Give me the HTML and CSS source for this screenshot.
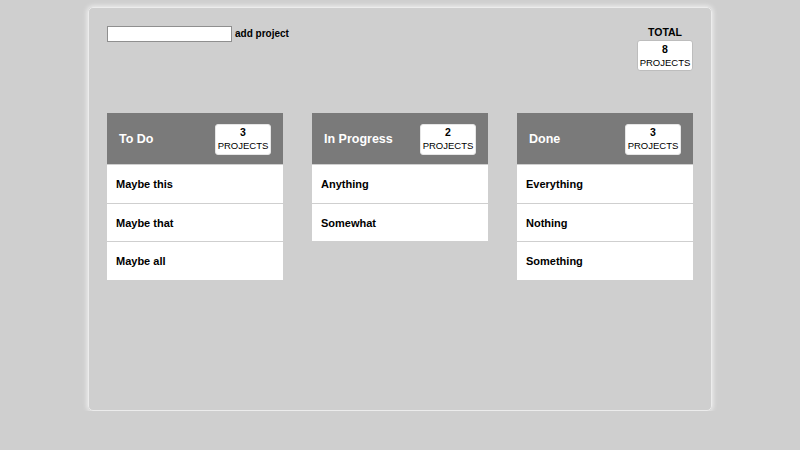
FILE: index.html
```html
<!DOCTYPE html>
<html>
<head>
<meta charset="utf-8">
<link rel="stylesheet" href="styles.css">
</head>
<body>
<div class="board">
  <div class="top">
    <div class="add">
      <input class="add-input" type="text">
      <span class="add-label">add project</span>
    </div>
    <div class="total">
      <div class="total-title">TOTAL</div>
      <div class="badge"><b>8</b><span>PROJECTS</span></div>
    </div>
  </div>
  <div class="columns">
    <div class="col">
      <div class="col-head"><span class="col-title">To Do</span><div class="badge"><b>3</b><span>PROJECTS</span></div></div>
      <div class="item">Maybe this</div>
      <div class="item">Maybe that</div>
      <div class="item">Maybe all</div>
    </div>
    <div class="col">
      <div class="col-head"><span class="col-title">In Progress</span><div class="badge"><b>2</b><span>PROJECTS</span></div></div>
      <div class="item">Anything</div>
      <div class="item">Somewhat</div>
    </div>
    <div class="col">
      <div class="col-head"><span class="col-title">Done</span><div class="badge"><b>3</b><span>PROJECTS</span></div></div>
      <div class="item">Everything</div>
      <div class="item">Nothing</div>
      <div class="item">Something</div>
    </div>
  </div>
</div>
</body>
</html>
```
FILE: styles.css
```css
html, body {
  margin: 0;
  padding: 0;
  background: #cfcfcf;
  font-family: "Liberation Sans", Arial, sans-serif;
}
.board {
  box-sizing: border-box;
  width: 624px;
  height: 404px;
  margin: 7px auto 0;
  border: 1px solid #ececec;
  border-radius: 5px;
  box-shadow: 0 0 5px 1px rgba(255,255,255,0.7);
  padding: 18px 18px;
}
.top {
  display: flex;
  justify-content: space-between;
  align-items: flex-start;
  height: 87px;
}
.add {
  display: flex;
  align-items: center;
}
.add-input {
  box-sizing: border-box;
  width: 125px;
  height: 16px;
  margin: 0;
  border: 1px solid #8f8f8f;
  background: #fff;
  padding: 0;
}
.add-label {
  font-size: 10px;
  font-weight: bold;
  margin-left: 3px;
  margin-top: -1px;
}
.total {
  display: flex;
  flex-direction: column;
  align-items: center;
}
.total-title {
  font-size: 10.5px;
  font-weight: bold;
  margin-bottom: 2px;
}
.badge {
  box-sizing: border-box;
  width: 56px;
  height: 31px;
  background: #fff;
  border: 1px solid #bdbdbd;
  border-radius: 3px;
  display: flex;
  flex-direction: column;
  align-items: center;
  justify-content: center;
  line-height: 13px;
}
.badge b {
  font-size: 10.5px;
}
.badge span {
  font-size: 9.5px;
}
.columns {
  display: grid;
  grid-template-columns: repeat(3, 1fr);
  column-gap: 29px;
  align-items: start;
}
.col-head {
  height: 51px;
  background: #7a7a7a;
  display: flex;
  align-items: center;
  justify-content: space-between;
  padding: 1px 12px 0 12px;
  box-sizing: border-box;
}
.col-head .badge {
  border-color: #e6e6e6;
}
.col-title {
  color: #fff;
  font-size: 12.5px;
  font-weight: bold;
}
.item {
  background: #fff;
  height: 38.7px;
  box-sizing: border-box;
  border-top: 1px solid #cfcfcf;
  padding-left: 9px;
  display: flex;
  align-items: center;
  font-size: 11px;
  font-weight: bold;
}
```
